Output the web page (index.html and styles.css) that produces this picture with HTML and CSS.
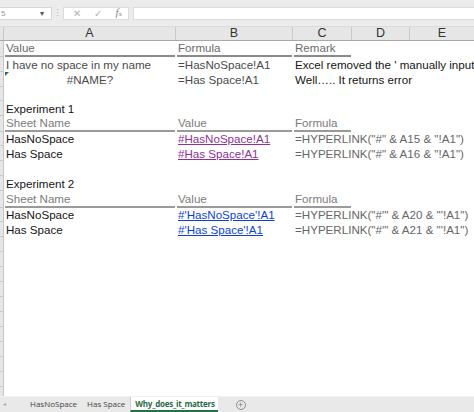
FILE: index.html
```html
<!DOCTYPE html>
<html>
<head>
<meta charset="utf-8">
<link rel="stylesheet" href="styles.css">
</head>
<body>
<div class="app">
  <div class="fbar">
    <div class="namebox"><span class="nb-text">5</span><span class="nb-arrow">▾</span></div>
    <div class="fsep">⋮</div>
    <div class="fbtns"><span class="fb">✕</span><span class="fb">✓</span><span class="fb fx"><i>f</i><sub>x</sub></span></div>
    <div class="finput"></div>
  </div>

  <div class="sheet">
    <div class="row colhead">
      <div class="rh corner"></div>
      <div class="ch">A</div><div class="ch">B</div><div class="ch">C</div><div class="ch">D</div><div class="ch last">E</div>
    </div>

    <div class="row r16">
      <div class="rh"></div>
      <div class="c"><span class="hd">Value</span></div>
      <div class="c"><span class="hd">Formula</span></div>
      <div class="c"><span class="hd">Remark</span></div>
      <div class="c"></div><div class="c"></div>
    </div>
    <div class="row">
      <div class="rh"></div>
      <div class="c t-dk">I have no space in my name</div>
      <div class="c t-dk">=HasNoSpace!A1</div>
      <div class="c t-bk">Excel removed the ' manually input</div>
      <div class="c"></div><div class="c"></div>
    </div>
    <div class="row">
      <div class="rh"></div>
      <div class="c t-dk center err">#NAME?</div>
      <div class="c t-dk">=Has Space!A1</div>
      <div class="c t-bk">Well….. It returns error</div>
      <div class="c"></div><div class="c"></div>
    </div>
    <div class="row r14">
      <div class="rh"></div><div class="c"></div><div class="c"></div><div class="c"></div><div class="c"></div><div class="c"></div>
    </div>
    <div class="row">
      <div class="rh"></div>
      <div class="c t-bk">Experiment 1</div>
      <div class="c"></div><div class="c"></div><div class="c"></div><div class="c"></div>
    </div>
    <div class="row r16">
      <div class="rh"></div>
      <div class="c"><span class="hd lt">Sheet Name</span></div>
      <div class="c"><span class="hd lt">Value</span></div>
      <div class="c"><span class="hd lt">Formula</span></div>
      <div class="c"></div><div class="c"></div>
    </div>
    <div class="row r14">
      <div class="rh"></div>
      <div class="c t-bk">HasNoSpace</div>
      <div class="c"><a class="link visited">#HasNoSpace!A1</a></div>
      <div class="c t-md">=HYPERLINK("#" &amp; A15 &amp; "!A1")</div>
      <div class="c"></div><div class="c"></div>
    </div>
    <div class="row">
      <div class="rh"></div>
      <div class="c t-bk">Has Space</div>
      <div class="c"><a class="link visited">#Has Space!A1</a></div>
      <div class="c t-md">=HYPERLINK("#" &amp; A16 &amp; "!A1")</div>
      <div class="c"></div><div class="c"></div>
    </div>
    <div class="row">
      <div class="rh"></div><div class="c"></div><div class="c"></div><div class="c"></div><div class="c"></div><div class="c"></div>
    </div>
    <div class="row">
      <div class="rh"></div>
      <div class="c t-bk">Experiment 2</div>
      <div class="c"></div><div class="c"></div><div class="c"></div><div class="c"></div>
    </div>
    <div class="row r17">
      <div class="rh"></div>
      <div class="c"><span class="hd lt">Sheet Name</span></div>
      <div class="c"><span class="hd lt">Value</span></div>
      <div class="c"><span class="hd lt">Formula</span></div>
      <div class="c"></div><div class="c"></div>
    </div>
    <div class="row r14">
      <div class="rh"></div>
      <div class="c t-bk">HasNoSpace</div>
      <div class="c"><a class="link">#'HasNoSpace'!A1</a></div>
      <div class="c t-md">=HYPERLINK("#'" &amp; A20 &amp; "'!A1")</div>
      <div class="c"></div><div class="c"></div>
    </div>
    <div class="row">
      <div class="rh"></div>
      <div class="c t-bk">Has Space</div>
      <div class="c"><a class="link">#'Has Space'!A1</a></div>
      <div class="c t-md">=HYPERLINK("#'" &amp; A21 &amp; "'!A1")</div>
      <div class="c"></div><div class="c"></div>
    </div>
    <div class="row"><div class="rh"></div></div>
    <div class="row"><div class="rh"></div></div>
    <div class="row"><div class="rh"></div></div>
    <div class="row"><div class="rh"></div></div>
    <div class="row"><div class="rh"></div></div>
    <div class="row"><div class="rh"></div></div>
    <div class="row"><div class="rh"></div></div>
    <div class="row"><div class="rh"></div></div>
    <div class="row"><div class="rh"></div></div>
    <div class="row"><div class="rh"></div></div>
    <div class="row"><div class="rh"></div></div>
    <div class="fill"><div class="rh"></div></div>
  </div>

  <div class="tabbar">
    <span class="tnav">◂</span>
    <span class="tab">HasNoSpace</span>
    <span class="tab">Has Space</span>
    <span class="tab active">Why_does_it_matters</span>
    <span class="tadd">+</span>
  </div>
</div>
</body>
</html>
```

FILE: styles.css
```css
html, body {
  margin: 0;
  padding: 0;
  background: #ffffff;
}
.app {
  width: 474px;
  height: 412px;
  display: flex;
  flex-direction: column;
  overflow: hidden;
  font-family: "Liberation Sans", Arial, sans-serif;
}
.fbar {
  height: 27px;
  flex: none;
  background: #ececec;
  display: flex;
  align-items: flex-start;
  padding-top: 7px;
  box-sizing: border-box;
  border-bottom: 1px solid #dadada;
}
.namebox {
  width: 52px;
  height: 13px;
  background: #fff;
  border: 1px solid #d6d6d6;
  border-left: none;
  display: flex;
  align-items: center;
  justify-content: space-between;
  box-sizing: border-box;
  font-size: 8px;
  color: #999;
}
.nb-text { margin-left: 1px; }
.nb-arrow { font-size: 8px; margin-right: 7px; color: #555; }
.fsep {
  width: 10px;
  margin-left: 0;
  font-size: 9px;
  color: #b8b8b8;
  line-height: 13px;
  text-align: center;
}
.fbtns {
  margin-left: 1px;
  width: 66px;
  height: 13px;
  background: #fff;
  border: 1px solid #dcdcdc;
  box-sizing: border-box;
  display: flex;
  align-items: center;
  justify-content: space-between;
  padding: 0 6px 0 9px;
  font-size: 10px;
  color: #b4b4b4;
}
.fb { line-height: 11px; }
.fx { font-family: "Liberation Serif", serif; font-size: 11px; color: #8a8a8a; }
.fx sub { font-size: 7px; vertical-align: baseline; }
.finput {
  margin-left: 4px;
  flex: 1;
  height: 13px;
  background: #fff;
  border: 1px solid #dcdcdc;
  border-right: none;
  box-sizing: border-box;
}

.sheet {
  flex: 1;
  display: flex;
  flex-direction: column;
  overflow: hidden;
}
.row {
  display: grid;
  grid-template-columns: 4px 172px 117px 59px 58px 64px;
  height: 15px;
  flex: none;
}
.row.r16 { height: 16px; }
.row.r14 { height: 14px; }
.row.r17 { height: 17px; }
.rh {
  background: #e6e6e6;
  border-bottom: 1px solid #c9c9c9;
  box-sizing: border-box;
  border-right: 1px solid #c6c6c6;
}
.fill { flex: 1; display: grid; grid-template-columns: 4px 1fr; }

.colhead {
  height: 14px;
  background: #e6e6e6;
  border-bottom: 1px solid #a8a8a8;
  box-sizing: border-box;
}
.colhead .rh { border-bottom: none; }
.ch {
  font-size: 12.5px;
  line-height: 13px;
  color: #333;
  text-align: center;
  border-right: 1px solid #cacaca;
}
.ch.last { border-right: none; }

.c {
  font-size: 11.6px;
  line-height: 13px;
  white-space: nowrap;
  overflow: visible;
  display: flex;
  align-items: flex-end;
  padding-left: 2px;
  padding-bottom: 1px;
  position: relative;
  min-width: 0;
}
.c.center { justify-content: center; padding-left: 0; }
.err::before {
  content: "";
  position: absolute;
  left: 1px;
  top: 0;
  border-top: 4px solid #1e7145;
  border-right: 4px solid transparent;
}
.hd {
  display: block;
  flex: 1;
  margin-left: -1px;
  margin-right: 1px;
  padding-left: 1px;
  color: #6b6b6b;
  border-bottom: 2px solid #8a8a8a;
  line-height: 12px;
  padding-bottom: 1px;
  margin-bottom: -1px;
}
.hd.lt { color: #7b7b7b; border-bottom-color: #9a9a9a; }
.t-dk { color: #4a4a4a; }
.t-bk { color: #151515; }
.t-md { color: #666666; }
.link {
  text-decoration: underline;
  color: #0b3fe0;
  cursor: pointer;
}
.link.visited { color: #8e2f9a; }

.tabbar {
  height: 15px;
  flex: none;
  background: #e9e9e9;
  display: flex;
  align-items: stretch;
  font-family: "Open Sans", "Noto Sans", sans-serif;
  font-size: 8px;
  color: #444;
  border-top: 1px solid #f2f2f2;
}
.tnav {
  width: 25px;
  font-size: 6px;
  color: #aaa;
  line-height: 15px;
  padding-left: 3px;
  box-sizing: border-box;
}
.tab {
  padding: 0 5px;
  line-height: 14px;
}
.tab.active {
  background: #fff;
  color: #1f6b3d;
  font-weight: 700;
  letter-spacing: -0.25px;
  border-bottom: 2px solid #217346;
  border-left: 1px solid #cfcfcf;
  line-height: 13px;
  padding: 0 3px 0 4px;
}
.tadd {
  margin-left: 18px;
  align-self: center;
  width: 10px;
  height: 10px;
  border: 1px solid #8f8f8f;
  border-radius: 50%;
  box-sizing: border-box;
  font-size: 9px;
  line-height: 8px;
  text-align: center;
  color: #777;
}
```
